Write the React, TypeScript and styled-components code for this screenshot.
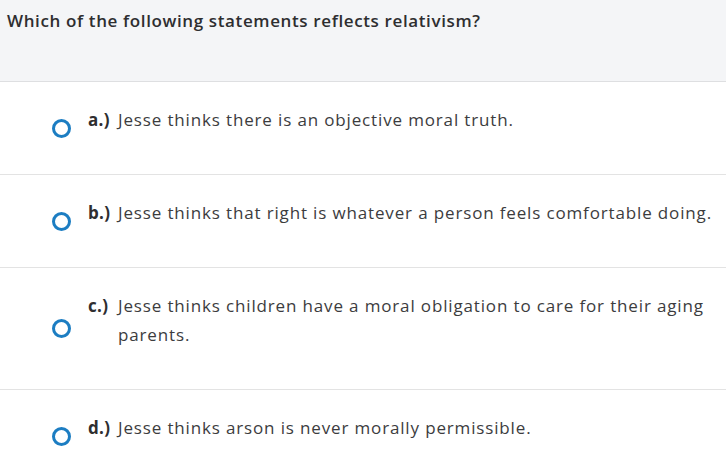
import React from "react";
import styled, { createGlobalStyle } from "styled-components";

const Global = createGlobalStyle`
  html, body { margin: 0; padding: 0; background: #ffffff; }
  body { font-family: "Open Sans", Lato, Arial, sans-serif; }
`;

const Page = styled.div`
  width: 726px;
  height: 467px;
  overflow: hidden;
  background: #ffffff;
`;

const Header = styled.div`
  height: 82px;
  box-sizing: border-box;
  background: #f4f5f7;
  border-bottom: 1px solid #dedfe1;
  padding: 7px 7px 0;
`;

const Question = styled.h1`
  margin: 0;
  font-size: 17px;
  line-height: 28px;
  font-weight: 600;
  letter-spacing: 0.62px;
  color: #2e2e30;
`;

const List = styled.div`
  display: flex;
  flex-direction: column;
`;

const Row = styled.div`
  display: flex;
  align-items: center;
  border-bottom: 1px solid #e3e3e3;
  padding-left: 52px;
`;

const Radio = styled.span`
  flex: none;
  width: 19px;
  height: 19px;
  box-sizing: border-box;
  border: 3px solid #1c7dc2;
  border-radius: 50%;
  margin-right: 17px;
`;

const Body = styled.div`
  display: flex;
  padding: 23px 0 40px;
  font-size: 17px;
  line-height: 29px;
  letter-spacing: 0.85px;
  color: #3c3c3e;
`;

const Label = styled.span`
  flex: none;
  width: 30px;
  font-weight: 700;
  letter-spacing: 0.3px;
  color: #2e2e30;
`;

const Text = styled.span``;

const options = [
  { label: "a.)", text: "Jesse thinks there is an objective moral truth." },
  { label: "b.)", text: "Jesse thinks that right is whatever a person feels comfortable doing." },
  { label: "c.)", text: "Jesse thinks children have a moral obligation to care for their aging parents." },
  { label: "d.)", text: "Jesse thinks arson is never morally permissible." },
];

export default function App() {
  return (
    <Page>
      <Global />
      <Header>
        <Question>Which of the following statements reflects relativism?</Question>
      </Header>
      <List>
        {options.map((o) => (
          <Row key={o.label}>
            <Radio />
            <Body>
              <Label>{o.label}</Label>
              <Text>{o.text}</Text>
            </Body>
          </Row>
        ))}
      </List>
    </Page>
  );
}
